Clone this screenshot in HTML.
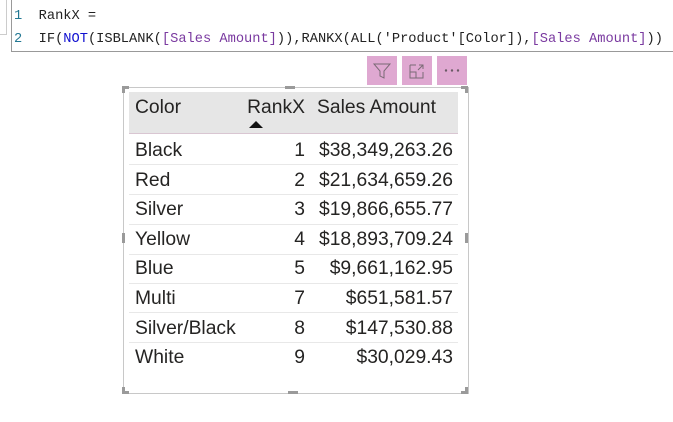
<!DOCTYPE html>
<html><head><meta charset="utf-8"><style>
body{margin:0;width:673px;height:422px;background:#fff;position:relative;overflow:hidden;font-family:"Liberation Sans",sans-serif}
.a{position:absolute}
.code{font-family:"Liberation Mono",monospace;font-size:13.7px;color:#222;white-space:pre;line-height:16px}
.ln{color:#237893}
.k{color:#1010d0}
.m{color:#7a3aa0}
.t{font-size:19.3px;color:#252423;line-height:20px;white-space:nowrap}
.r{text-align:right}
.sep{position:absolute;left:129px;width:329px;height:1px;background:#e8e8e8}
.ic{position:absolute;top:56px;width:30px;height:29px;background:#dfa8d1}
.h{position:absolute;background:#9a9a9a}
</style></head><body>
<div class="a" style="left:0;top:0;width:6px;height:34px;border:1px solid #ccc;border-left:none;border-top:none"></div>
<div class="a" style="left:11px;top:0;width:670px;height:51px;border:1px solid #999;border-top:none"></div>
<div class="a code" style="left:14px;top:9px"><span class="ln">1</span>  RankX =</div>
<div class="a code" style="left:14px;top:32px"><span class="ln">2</span>  IF(<span class="k">NOT</span>(ISBLANK(<span class="m">[Sales Amount]</span>)),RANKX(ALL('Product'[Color]),<span class="m">[Sales Amount]</span>))</div>

<div class="ic" style="left:367px"><svg width="30" height="29"><path d="M7 8h16l-6 7v7l-4 -2v-5z" fill="none" stroke="#7a6a75" stroke-width="1"/></svg></div>
<div class="ic" style="left:402px"><svg width="30" height="29"><path d="M8 9h6M8 9v13h13v-6M8 16h6v6M17 9h4v4M21 9l-5 5" fill="none" stroke="#7a6a75" stroke-width="1"/></svg></div>
<div class="ic" style="left:437px"><svg width="30" height="29"><circle cx="9" cy="14.5" r="1.2" fill="#6a5a65"/><circle cx="15" cy="14.5" r="1.2" fill="#6a5a65"/><circle cx="21" cy="14.5" r="1.2" fill="#6a5a65"/></svg></div>

<div class="a" style="left:123px;top:87px;width:344px;height:305px;border:1px solid #c8c8c8"></div>
<div class="h" style="left:122px;top:86px;width:7px;height:3px"></div><div class="h" style="left:122px;top:86px;width:3px;height:7px"></div>
<div class="h" style="left:461px;top:86px;width:7px;height:3px"></div><div class="h" style="left:465px;top:86px;width:3px;height:7px"></div>
<div class="h" style="left:122px;top:391px;width:7px;height:3px"></div><div class="h" style="left:122px;top:387px;width:3px;height:7px"></div>
<div class="h" style="left:461px;top:391px;width:7px;height:3px"></div><div class="h" style="left:465px;top:387px;width:3px;height:7px"></div>
<div class="h" style="left:285px;top:86px;width:10px;height:3px"></div><div class="h" style="left:288px;top:391px;width:10px;height:3px"></div>
<div class="h" style="left:122px;top:233px;width:3px;height:10px"></div><div class="h" style="left:465px;top:233px;width:3px;height:10px"></div>

<div class="a" style="left:129px;top:92px;width:329px;height:41px;background:#e6e6e6;border-bottom:1px solid #d9c6d2"></div>
<div class="a t" style="left:135px;top:98px">Color</div>
<div class="a t r" style="left:240px;width:65px;top:98px">RankX</div>
<div class="a t" style="left:317px;top:98px">Sales Amount</div>
<svg class="a" style="left:249px;top:121px" width="14" height="8"><path d="M0 7L7 0L14 7Z" fill="#111"/></svg>

<div class="sep" style="top:164px"></div><div class="sep" style="top:194px"></div><div class="sep" style="top:224px"></div><div class="sep" style="top:254px"></div><div class="sep" style="top:283px"></div><div class="sep" style="top:312px"></div><div class="sep" style="top:342px"></div>

<div class="a t" style="left:135px;top:136px;line-height:29.6px">Black<br>Red<br>Silver<br>Yellow<br>Blue<br>Multi<br>Silver/Black<br>White</div>
<div class="a t r" style="left:260px;width:45px;top:136px;line-height:29.6px">1<br>2<br>3<br>4<br>5<br>7<br>8<br>9</div>
<div class="a t r" style="left:300px;width:153px;top:136px;line-height:29.6px">$38,349,263.26<br>$21,634,659.26<br>$19,866,655.77<br>$18,893,709.24<br>$9,661,162.95<br>$651,581.57<br>$147,530.88<br>$30,029.43</div>
</body></html>
